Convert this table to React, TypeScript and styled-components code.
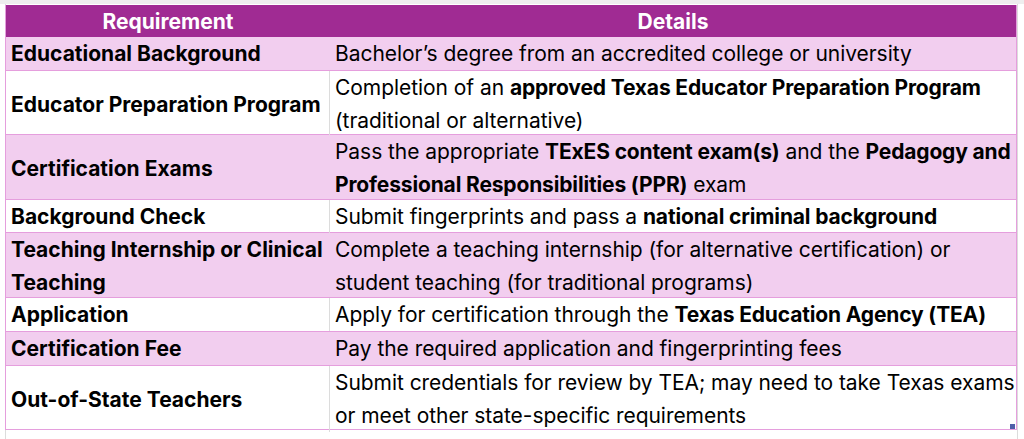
import React from 'react'
import styled, { createGlobalStyle } from 'styled-components'

type Row = {
  label: React.ReactNode
  details: React.ReactNode
  height: number
}

const rows: Row[] = [
  {
    label: 'Educational Background',
    details: 'Bachelor’s degree from an accredited college or university',
    height: 34,
  },
  {
    label: 'Educator Preparation Program',
    details: (
      <>
        Completion of an <b>approved Texas Educator Preparation Program</b>
        <br />
        (traditional or alternative)
      </>
    ),
    height: 64,
  },
  {
    label: 'Certification Exams',
    details: (
      <>
        Pass the appropriate <b>TExES content exam(s)</b> and the <b>Pedagogy and</b>
        <br />
        <b>Professional Responsibilities (PPR)</b> exam
      </>
    ),
    height: 65,
  },
  {
    label: 'Background Check',
    details: (
      <>
        Submit fingerprints and pass a <b>national criminal background</b>
      </>
    ),
    height: 33,
  },
  {
    label: (
      <>
        Teaching Internship or Clinical
        <br />
        Teaching
      </>
    ),
    details: (
      <>
        Complete a teaching internship (for alternative certification) or
        <br />
        student teaching (for traditional programs)
      </>
    ),
    height: 65,
  },
  {
    label: 'Application',
    details: (
      <>
        Apply for certification through the <b>Texas Education Agency (TEA)</b>
      </>
    ),
    height: 34,
  },
  {
    label: 'Certification Fee',
    details: 'Pay the required application and fingerprinting fees',
    height: 34,
  },
  {
    label: 'Out-of-State Teachers',
    details: (
      <>
        Submit credentials for review by TEA; may need to take Texas exams
        <br />
        or meet other state-specific requirements
      </>
    ),
    height: 64,
  },
]

const App: React.FunctionComponent = () => {
  return (
    <Sheet>
      <GlobalStyle />
      <Table>
        <HeaderRow>
          <HeaderCell>Requirement</HeaderCell>
          <HeaderCell>Details</HeaderCell>
        </HeaderRow>
        {rows.map((row, i) => (
          <BodyRow key={i} $shaded={i % 2 === 0} $height={row.height}>
            <LabelCell $shaded={i % 2 === 0}>
              <span>{row.label}</span>
            </LabelCell>
            <DetailCell>
              <span>{row.details}</span>
            </DetailCell>
          </BodyRow>
        ))}
        <FillHandle />
      </Table>
    </Sheet>
  )
}

const GlobalStyle = createGlobalStyle`
  body {
    margin: 0;
    background: #ffffff;
    font-family: Inter, "Liberation Sans", sans-serif;
  }
`

const Sheet = styled.div`
  width: 1024px;
  height: 439px;
  overflow: hidden;
  box-sizing: border-box;
  padding: 5px 0 0 5px;
  background:
    linear-gradient(#eeeeee, #eeeeee) top / 100% 4px no-repeat,
    linear-gradient(#dcdcdc, #dcdcdc) 5px 0 / 1px 100% no-repeat,
    linear-gradient(#dcdcdc, #dcdcdc) 1017px 0 / 1px 100% no-repeat,
    #ffffff;
`

const Table = styled.div`
  position: relative;
  box-sizing: border-box;
  width: 1012px;
  display: flex;
  flex-direction: column;
  border-left: 1px solid #e59edd;
  border-right: 1px solid #e59edd;
  color: #000000;
  font-size: 21px;
  line-height: 33px;
`

const HeaderRow = styled.div`
  display: grid;
  grid-template-columns: 324px 1fr;
  height: 32px;
  background: #a02b93;
`

const HeaderCell = styled.div`
  display: flex;
  align-items: center;
  justify-content: center;
  color: #ffffff;
  font-weight: 700;
`

const BodyRow = styled.div<{ $shaded: boolean; $height: number }>`
  display: grid;
  grid-template-columns: 324px 1fr;
  box-sizing: border-box;
  height: ${(p) => p.$height}px;
  border-bottom: 1px solid #e59edd;
  background: ${(p) => (p.$shaded ? '#f2ceef' : '#ffffff')};
`

const LabelCell = styled.div<{ $shaded: boolean }>`
  display: flex;
  align-items: center;
  padding-left: 5px;
  font-weight: 700;
  white-space: nowrap;
  border-right: 1px solid ${(p) => (p.$shaded ? 'transparent' : '#dcdcdc')};
`

const DetailCell = styled.div`
  display: flex;
  align-items: center;
  padding-left: 5px;
  white-space: nowrap;
  letter-spacing: -0.05px;

  b {
    font-weight: 700;
    letter-spacing: -0.15px;
  }
`

const FillHandle = styled.div`
  position: absolute;
  right: 1px;
  bottom: 1px;
  width: 5px;
  height: 5px;
  background: #4f5fa8;
`

export default App
